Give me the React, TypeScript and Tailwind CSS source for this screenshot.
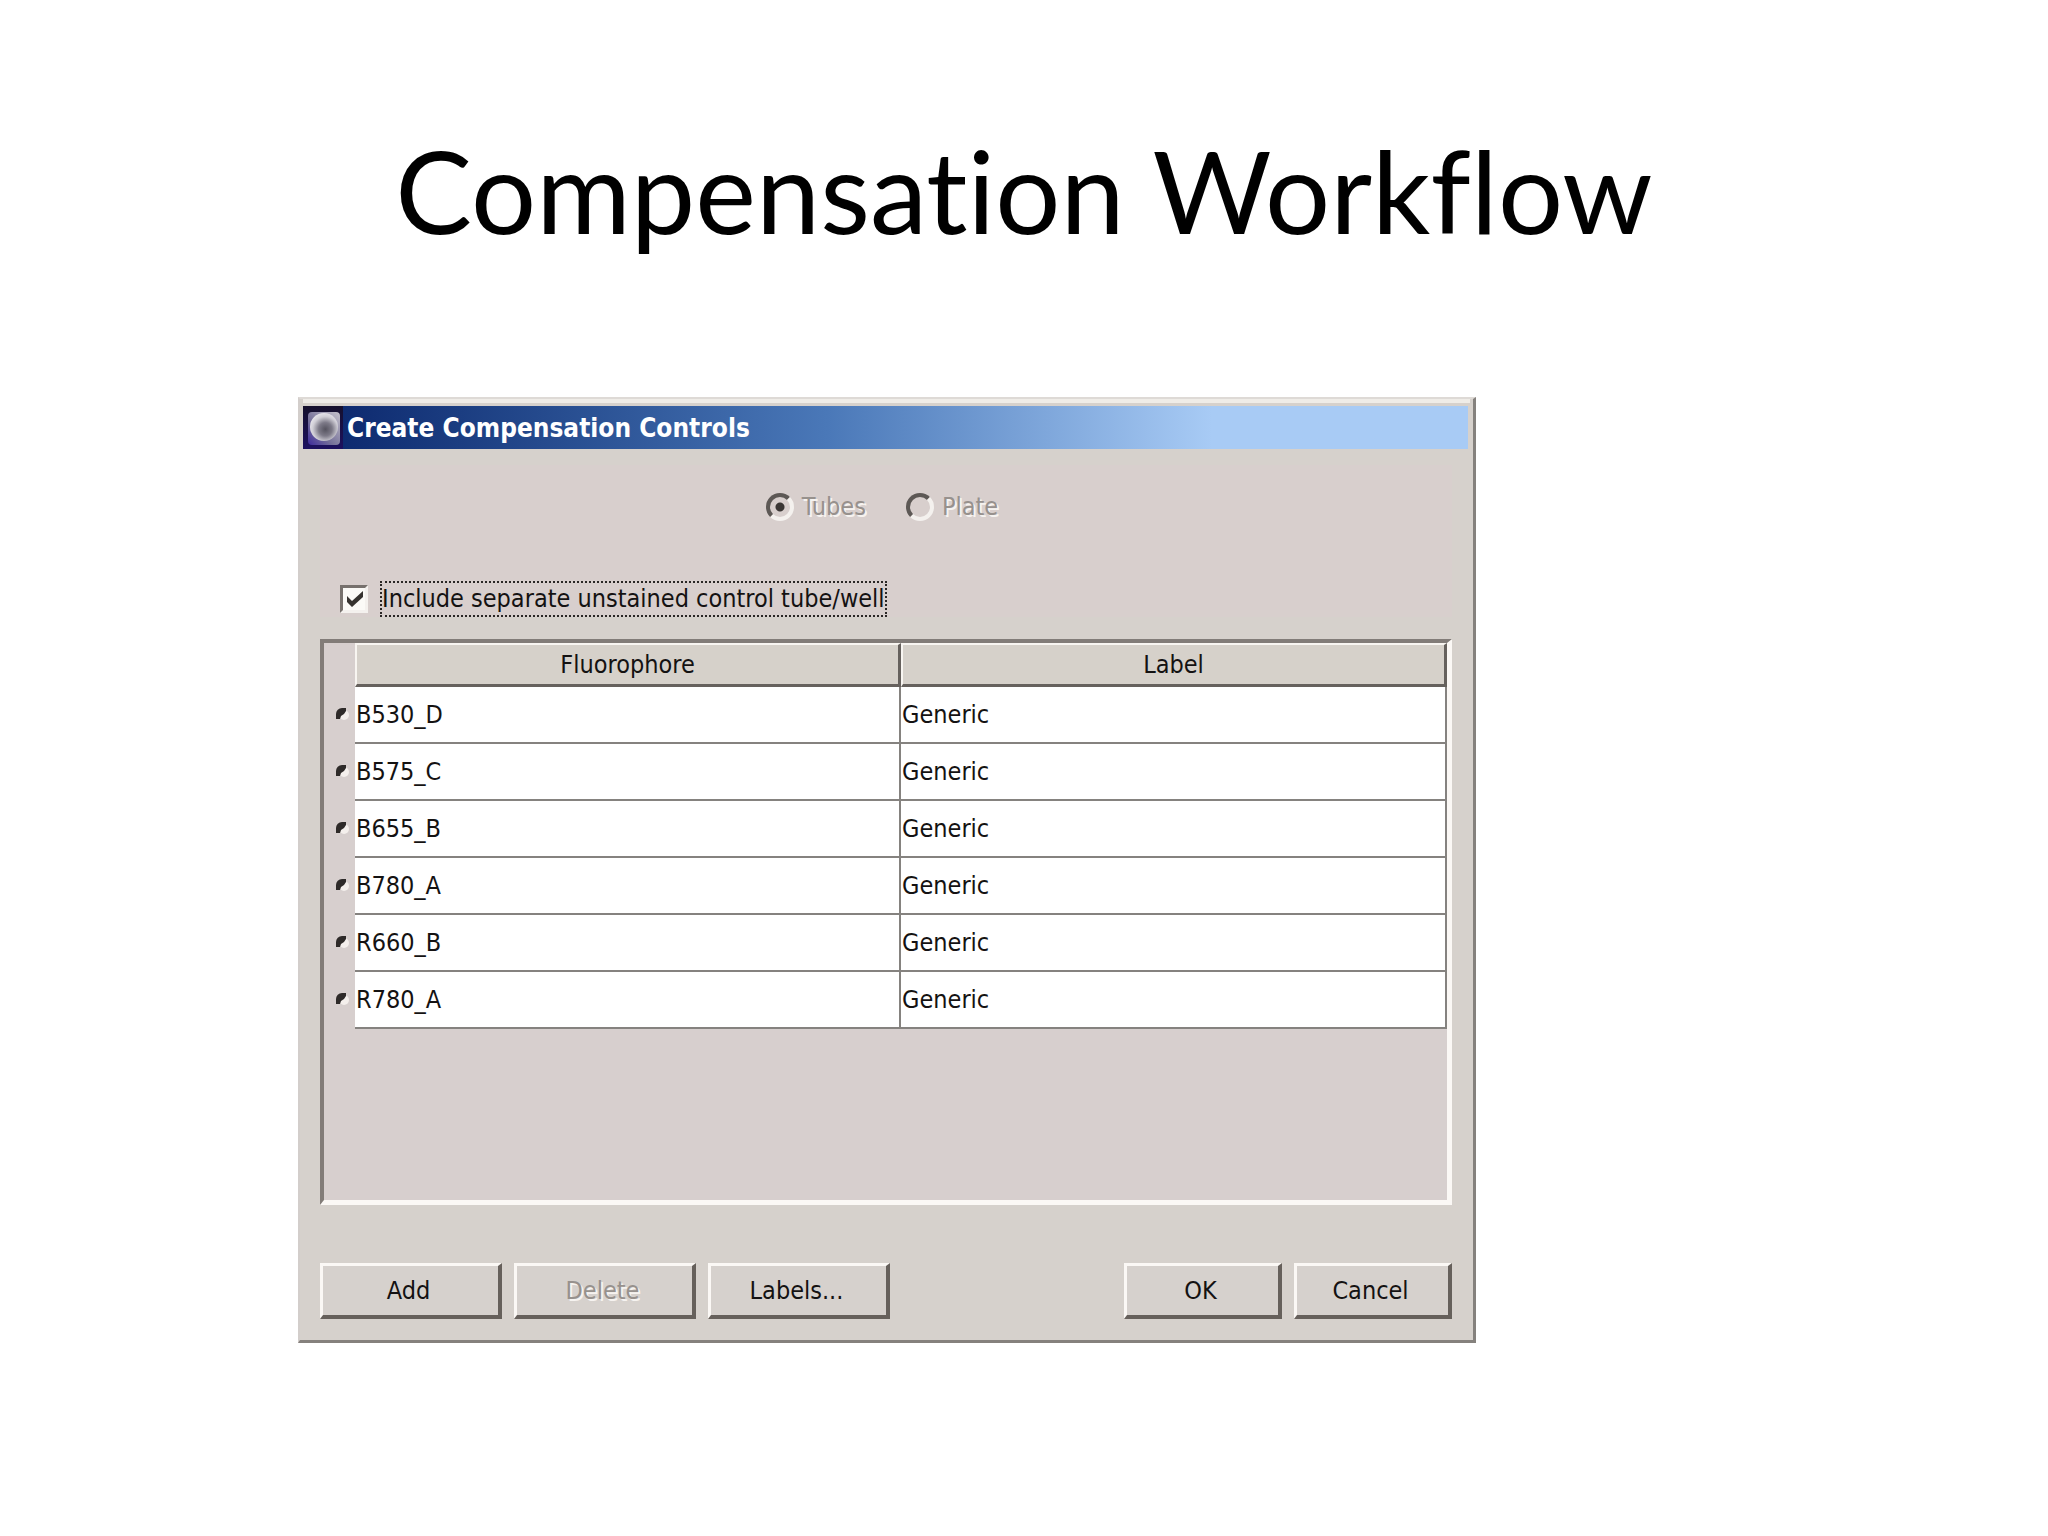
import { useState } from "react";

const ROWS = [
  { fluorophore: "B530_D", label: "Generic" },
  { fluorophore: "B575_C", label: "Generic" },
  { fluorophore: "B655_B", label: "Generic" },
  { fluorophore: "B780_A", label: "Generic" },
  { fluorophore: "R660_B", label: "Generic" },
  { fluorophore: "R780_A", label: "Generic" },
];

const AppIcon = () => (
  <svg className="h-full w-10" viewBox="0 0 40 43" aria-hidden="true">
    <defs>
      <linearGradient id="frame" x1="0" y1="0" x2="0" y2="1">
        <stop offset="0" stopColor="#15102c" />
        <stop offset="1" stopColor="#1d1160" />
      </linearGradient>
      <linearGradient id="tile" x1="0" y1="1" x2="1" y2="0">
        <stop offset="0" stopColor="#3d2a9c" />
        <stop offset="0.4" stopColor="#77729a" />
        <stop offset="1" stopColor="#c4c1cb" />
      </linearGradient>
      <radialGradient id="sphere" cx="0.55" cy="0.58" r="0.6">
        <stop offset="0" stopColor="#55535f" />
        <stop offset="0.4" stopColor="#7d7a88" />
        <stop offset="0.75" stopColor="#cfcdd5" />
        <stop offset="1" stopColor="#e8e6ec" />
      </radialGradient>
    </defs>
    <rect width="40" height="43" fill="url(#frame)" />
    <rect x="5" y="6" width="32" height="33" rx="4" fill="url(#tile)" />
    <circle cx="21" cy="21" r="14" fill="url(#sphere)" />
  </svg>
);

const RowMarker = () => (
  <svg className="mb-1 ml-3 h-3.5 w-3.5" viewBox="0 0 14 14" aria-hidden="true">
    <circle cx="8" cy="8" r="5" fill="#f4efec" />
    <path d="M0 12V7a6 6 0 0 1 6-6h4v3L8 7 5 9l-1 3z" fill="#2e2a29" />
  </svg>
);

function DialogButton({
  children,
  disabled = false,
  size = "lg",
}: {
  children: string;
  disabled?: boolean;
  size?: "sm" | "lg";
}) {
  return (
    <button
      type="button"
      disabled={disabled}
      className={`h-14 border-t-3 border-r-4 border-b-4 border-l-3 border-t-[#fbf8f5] border-r-[#66605b] border-b-[#66605b] border-l-[#fbf8f5] bg-[#d6d1cd] pr-1 ${
        size === "lg" ? "w-[182px]" : "w-[158px]"
      } ${
        disabled ? "text-[#97918d] [text-shadow:2px_2px_0_#f6f3f0]" : "text-[#141212]"
      }`}
    >
      {children}
    </button>
  );
}

function TargetRadio({
  value,
  checked,
}: {
  value: string;
  checked: boolean;
}) {
  return (
    <label className="flex items-center gap-2 text-[#97918d] [text-shadow:2px_2px_0_#f6f3f0]">
      <input
        type="radio"
        name="target"
        value={value}
        defaultChecked={checked}
        disabled
        className="h-7 w-7 appearance-none rounded-full border-4 border-t-[#5d5855] border-r-[#f4f1ee] border-b-[#f4f1ee] border-l-[#5d5855] checked:bg-[radial-gradient(circle,#3b3735_4px,transparent_5px)]"
      />
      {value}
    </label>
  );
}

export default function App() {
  const [unstained, setUnstained] = useState(true);

  return (
    <main className="min-h-screen bg-white pb-20 font-['DejaVu_Sans_Condensed','DejaVu_Sans',sans-serif] text-[25px] leading-8 text-[#141212]">
      <h1 className="pt-[113px] text-center font-['Lato',sans-serif] text-[115px] leading-[152px] text-black [font-variant-ligatures:none]">
        Compensation Workflow
      </h1>

      <section className="mt-[132px] ml-[298px] max-w-[1178px] border-t-2 border-r-3 border-b-3 border-l-2 border-t-[#dedad6] border-r-[#85817d] border-b-[#85817d] border-l-[#d3cecb] bg-[#d6d1cc] px-[3px] pb-[21px]">
        <div className="h-1 bg-[#efece7]" />
        <header className="mt-[3px] mr-0.5 flex h-[43px] items-center gap-1 bg-linear-to-r from-[#0a246a] via-[#4a78b8] via-45% to-[#a8cbf5] to-78% text-[26px] font-bold text-white">
          <AppIcon />
          <h2>Create Compensation Controls</h2>
        </header>

        <div className="mr-[18px] ml-[17px]">
          <div className="mt-4 bg-[#d8cfcd]">
            <fieldset className="flex justify-center gap-10 pt-[26px] pr-2 pb-[58px]">
              <TargetRadio value="Tubes" checked={true} />
              <TargetRadio value="Plate" checked={false} />
            </fieldset>

            <label className="flex w-fit items-center gap-3 pl-5">
              <span className="grid">
                <input
                  type="checkbox"
                  checked={unstained}
                  onChange={(e) => setUnstained(e.target.checked)}
                  className="peer col-start-1 row-start-1 h-7 w-7 appearance-none border-3 border-t-[#77716d] border-r-[#f4f1ee] border-b-[#f4f1ee] border-l-[#77716d] bg-[#fbfaf7]"
                />
                <svg
                  className="pointer-events-none invisible col-start-1 row-start-1 h-7 w-7 peer-checked:visible"
                  viewBox="0 0 28 28"
                  aria-hidden="true"
                >
                  <path d="M7 11v6l5 5L23 12V6L12 16z" fill="#35322f" />
                </svg>
              </span>
              <span className="border-2 border-dotted border-[#2a2725]">
                Include separate unstained control tube/well
              </span>
            </label>
          </div>

          <div className="mt-[22px] h-[566px] border-t-4 border-r-5 border-b-5 border-l-4 border-t-[#827c78] border-r-[#fbf8f5] border-b-[#fbf8f5] border-l-[#827c78] bg-[#d7cfce]">
            <table className="w-full table-fixed border-separate border-spacing-0">
              <colgroup>
                <col className="w-[31px]" />
                <col />
                <col />
              </colgroup>
              <thead>
                <tr className="h-11">
                  <td />
                  {["Fluorophore", "Label"].map((name) => (
                    <th
                      key={name}
                      scope="col"
                      className="border-t-2 border-r-3 border-b-3 border-l-2 border-t-[#f8f5f1] border-r-[#66615d] border-b-[#66615d] border-l-[#f8f5f1] bg-[#d6d1ca] p-0 font-normal"
                    >
                      {name}
                    </th>
                  ))}
                </tr>
              </thead>
              <tbody>
                {ROWS.map((row) => (
                  <tr key={row.fluorophore} className="h-[57px]">
                    <td className="p-0">
                      <RowMarker />
                    </td>
                    <td className="border-r-2 border-b-2 border-[#85827f] bg-white p-0 pl-px">
                      {row.fluorophore}
                    </td>
                    <td className="border-r-2 border-b-2 border-[#85827f] bg-white p-0 pl-px">
                      {row.label}
                    </td>
                  </tr>
                ))}
              </tbody>
            </table>
          </div>

          <footer className="mt-[58px] flex justify-between">
            <div className="flex gap-3">
              <DialogButton>Add</DialogButton>
              <DialogButton disabled>Delete</DialogButton>
              <DialogButton>Labels...</DialogButton>
            </div>
            <div className="flex gap-3">
              <DialogButton size="sm">OK</DialogButton>
              <DialogButton size="sm">Cancel</DialogButton>
            </div>
          </footer>
        </div>
      </section>
    </main>
  );
}
